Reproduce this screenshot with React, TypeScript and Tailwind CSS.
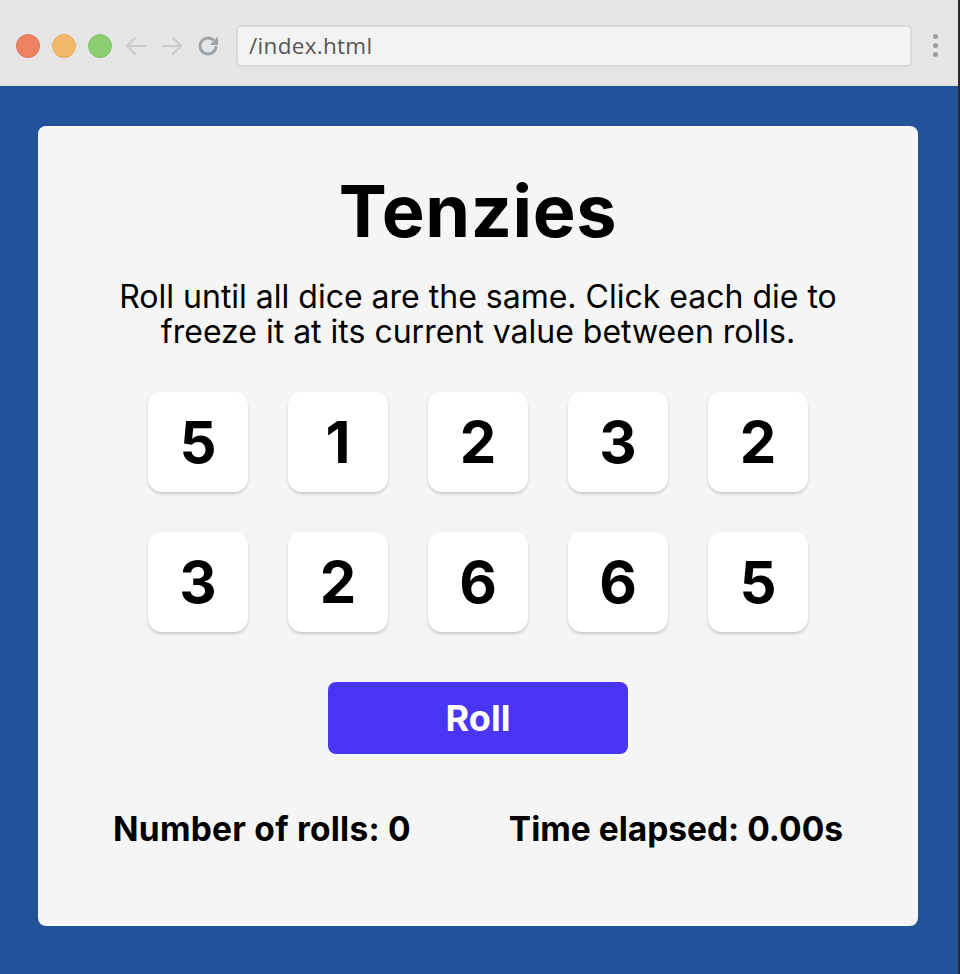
import React from "react";

const dice = [5, 1, 2, 3, 2, 3, 2, 6, 6, 5];

export default function App() {
  return (
    <div className="w-[960px] h-[974px] flex flex-col bg-[#22539a] overflow-hidden relative" style={{ fontFamily: "Inter, 'Noto Sans', sans-serif" }}>
      {/* browser chrome */}
      <div className="h-[86px] shrink-0 bg-[#e6e6e6] flex items-center pt-[6px] pl-[16px] pr-[14px] border-b border-[#dcdcdc]">
        <div className="flex items-center gap-[12px]">
          <div className="w-[24px] h-[24px] rounded-full bg-[#ee8263] border border-[#e0735a]" />
          <div className="w-[24px] h-[24px] rounded-full bg-[#f2b96a] border border-[#e6ab5c]" />
          <div className="w-[24px] h-[24px] rounded-full bg-[#8ccf72] border border-[#7fc466]" />
        </div>
        <div className="flex items-center ml-[12px] gap-[12px]">
          <svg width="24" height="24" viewBox="0 0 24 24" fill="none" stroke="#c9cbcd" strokeWidth="2.2" strokeLinecap="round" strokeLinejoin="round">
            <path d="M21 12H3" />
            <path d="M11 20l-8-8 8-8" />
          </svg>
          <svg width="24" height="24" viewBox="0 0 24 24" fill="none" stroke="#c9cbcd" strokeWidth="2.2" strokeLinecap="round" strokeLinejoin="round">
            <path d="M3 12h18" />
            <path d="M13 4l8 8-8 8" />
          </svg>
          <svg width="24" height="24" viewBox="0 0 24 24" fill="none">
            <path d="M20 12a8 8 0 1 1-2.34-5.66" stroke="#9ea3a8" strokeWidth="2.8" strokeLinecap="butt" />
            <path d="M22 2.5v8.5h-8.5z" fill="#9ea3a8" />
          </svg>
        </div>
        <div className="ml-[16px] w-[676px] h-[42px] rounded-[5px] bg-[#f3f3f3] border-2 border-[#dadada] flex items-center pl-[11px] text-[22.5px] text-[#555] tracking-[0.3px]" style={{ fontFamily: "'Open Sans', Inter, sans-serif" }}>
          /index.html
        </div>
        <div className="ml-auto flex flex-col gap-[4px] mr-[8px]">
          <div className="w-[5px] h-[5px] rounded-full bg-[#9a9da1]" />
          <div className="w-[5px] h-[5px] rounded-full bg-[#9a9da1]" />
          <div className="w-[5px] h-[5px] rounded-full bg-[#9a9da1]" />
        </div>
      </div>

      <div className="absolute right-0 top-0 w-[2px] h-[974px] bg-[#2b2b2b]" />

      {/* main */}
      <div className="flex-1 pt-[40px] pl-[38px]">
        <div className="w-[880px] h-[800px] bg-[#f5f5f5] rounded-[8px] flex flex-col items-center">
          <h1 className="mt-[45px] text-[72px] leading-[80px] font-bold text-black tracking-[0.6px]">Tenzies</h1>
          <p className="mt-[28px] text-[32px] leading-[35px] text-black text-center w-[760px]">
            Roll until all dice are the same. Click each die to freeze it at its current value between rolls.
          </p>
          <div className="mt-[43px] grid grid-cols-5 gap-[40px]">
            {dice.map((d, i) => (
              <div
                key={i}
                className="w-[100px] h-[100px] bg-white rounded-[14px] shadow-[0_2px_3px_rgba(0,0,0,0.18)] flex items-center justify-center text-[58px] font-bold text-black"
              >
                {d}
              </div>
            ))}
          </div>
          <button className="mt-[50px] w-[300px] h-[72px] rounded-[8px] bg-[#4a35f6] text-white text-[36px] font-bold flex items-center justify-center">
            Roll
          </button>
          <div className="mt-[55px] flex w-[730px] justify-between text-[33.5px] leading-[40px] font-bold text-black">
            <span className="tracking-[0.25px]">Number of rolls: 0</span>
            <span>Time elapsed: 0.00s</span>
          </div>
        </div>
      </div>
    </div>
  );
}
